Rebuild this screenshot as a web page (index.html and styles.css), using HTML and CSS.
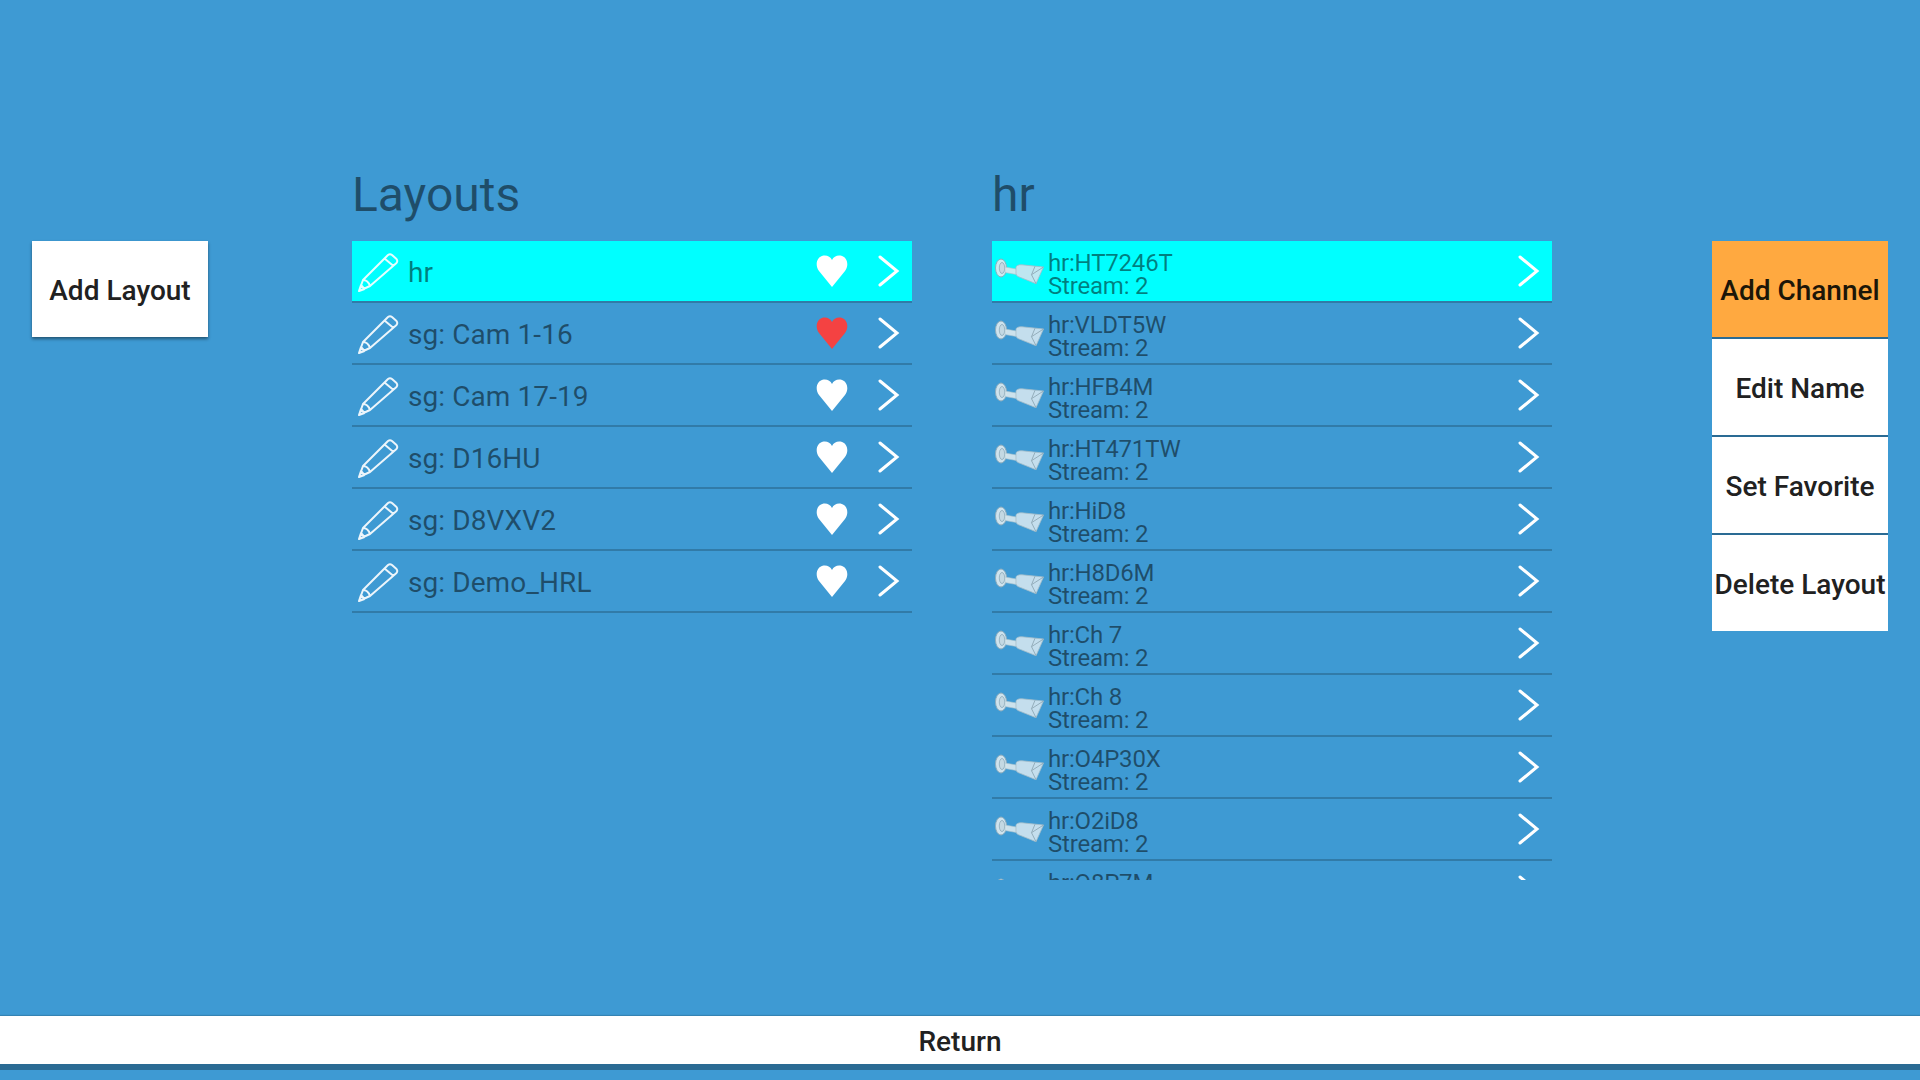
FILE: index.html
```html
<!DOCTYPE html>
<html lang="en">
<head>
    <meta charset="UTF-8">
    <meta name="viewport" content="width=device-width, initial-scale=1.0">
    <title>Layouts</title>
    <link rel="stylesheet" href="styles.css">
</head>
<body>
    <svg class="defs" width="0" height="0">
        <symbol id="pencil" viewBox="0 0 42 40">
            <path d="M2 38 L6 27 L31 2 Q33 0.5 35 2 L39.5 6 Q41 8 39.5 10 L13 33 Z M6 27 Q11 27 13 33 M27.5 5.500 L36.500 13 M2 38 L4 32 L7.500 36 Z" fill="none" stroke="#fff" stroke-opacity="0.9" stroke-width="2" stroke-linejoin="round"/>
        </symbol>
        <symbol id="heart" viewBox="0 0 32 32">
            <path d="M16 32 L3 16 C-1 11 0 2 7.5 0.5 C11 0 14.5 1.5 16 5 C17.5 1.5 21 0 24.5 0.5 C32 2 33 11 29 16 Z"/>
        </symbol>
        <symbol id="chevron" viewBox="0 0 22 32">
            <path d="M2 2 L19 16 L2 30" fill="none" stroke="#fff" stroke-width="3" stroke-linecap="round" stroke-linejoin="miter"/>
        </symbol>
        <symbol id="camera" viewBox="0 0 50 27">
            <ellipse cx="6" cy="10" rx="5.500" ry="9" fill="#dbe9ef" fill-opacity="0.92" stroke="#8fadbd" stroke-width="1"/>
            <ellipse cx="7" cy="10" rx="2.700" ry="5.500" fill="#c4d9e3" stroke="#9ab6c4" stroke-width="1"/>
            <path d="M10 9 L21.500 11 L21.500 16.500 L10 14.500 Z" fill="#d9e8ee" fill-opacity="0.92" stroke="#a9c2ce" stroke-width="0.6"/>
            <path d="M22.500 7.500 Q24 6.500 27 6.800 L48.500 9 L41 25.700 L23 18.500 Q21 17.500 21 15.500 L21 9.500 Q21 8 22.500 7.500 Z" fill="#cfe4ef" fill-opacity="0.92" stroke="#a2bcc9" stroke-width="0.8"/>
            <path d="M40 8.300 L36.500 16.700 L41 25.700 M36.500 16.700 L48.500 9" fill="none" stroke="#8ea8b6" stroke-width="0.9"/>
        </symbol>
    </svg>

    <main class="screen">
        <div class="side side-left">
            <button class="action raised">Add Layout</button>
        </div>

        <h2 class="heading heading-layouts">Layouts</h2>
        <ul class="list list-layouts">
            <li class="row selected">
                <svg class="pencil"><use href="#pencil"/></svg>
                <span class="row-name">hr</span>
                <svg class="heart"><use href="#heart"/></svg>
                <svg class="chevron"><use href="#chevron"/></svg>
            </li>
            <li class="row">
                <svg class="pencil"><use href="#pencil"/></svg>
                <span class="row-name">sg: Cam 1-16</span>
                <svg class="heart favorite"><use href="#heart"/></svg>
                <svg class="chevron"><use href="#chevron"/></svg>
            </li>
            <li class="row">
                <svg class="pencil"><use href="#pencil"/></svg>
                <span class="row-name">sg: Cam 17-19</span>
                <svg class="heart"><use href="#heart"/></svg>
                <svg class="chevron"><use href="#chevron"/></svg>
            </li>
            <li class="row">
                <svg class="pencil"><use href="#pencil"/></svg>
                <span class="row-name">sg: D16HU</span>
                <svg class="heart"><use href="#heart"/></svg>
                <svg class="chevron"><use href="#chevron"/></svg>
            </li>
            <li class="row">
                <svg class="pencil"><use href="#pencil"/></svg>
                <span class="row-name">sg: D8VXV2</span>
                <svg class="heart"><use href="#heart"/></svg>
                <svg class="chevron"><use href="#chevron"/></svg>
            </li>
            <li class="row">
                <svg class="pencil"><use href="#pencil"/></svg>
                <span class="row-name">sg: Demo_HRL</span>
                <svg class="heart"><use href="#heart"/></svg>
                <svg class="chevron"><use href="#chevron"/></svg>
            </li>
        </ul>

        <h2 class="heading heading-channels">hr</h2>
        <ul class="list list-channels">
            <li class="row selected">
                <svg class="camera"><use href="#camera"/></svg>
                <span class="channel">hr:HT7246T<br>Stream: 2</span>
                <svg class="chevron"><use href="#chevron"/></svg>
            </li>
            <li class="row">
                <svg class="camera"><use href="#camera"/></svg>
                <span class="channel">hr:VLDT5W<br>Stream: 2</span>
                <svg class="chevron"><use href="#chevron"/></svg>
            </li>
            <li class="row">
                <svg class="camera"><use href="#camera"/></svg>
                <span class="channel">hr:HFB4M<br>Stream: 2</span>
                <svg class="chevron"><use href="#chevron"/></svg>
            </li>
            <li class="row">
                <svg class="camera"><use href="#camera"/></svg>
                <span class="channel">hr:HT471TW<br>Stream: 2</span>
                <svg class="chevron"><use href="#chevron"/></svg>
            </li>
            <li class="row">
                <svg class="camera"><use href="#camera"/></svg>
                <span class="channel">hr:HiD8<br>Stream: 2</span>
                <svg class="chevron"><use href="#chevron"/></svg>
            </li>
            <li class="row">
                <svg class="camera"><use href="#camera"/></svg>
                <span class="channel">hr:H8D6M<br>Stream: 2</span>
                <svg class="chevron"><use href="#chevron"/></svg>
            </li>
            <li class="row">
                <svg class="camera"><use href="#camera"/></svg>
                <span class="channel">hr:Ch 7<br>Stream: 2</span>
                <svg class="chevron"><use href="#chevron"/></svg>
            </li>
            <li class="row">
                <svg class="camera"><use href="#camera"/></svg>
                <span class="channel">hr:Ch 8<br>Stream: 2</span>
                <svg class="chevron"><use href="#chevron"/></svg>
            </li>
            <li class="row">
                <svg class="camera"><use href="#camera"/></svg>
                <span class="channel">hr:O4P30X<br>Stream: 2</span>
                <svg class="chevron"><use href="#chevron"/></svg>
            </li>
            <li class="row">
                <svg class="camera"><use href="#camera"/></svg>
                <span class="channel">hr:O2iD8<br>Stream: 2</span>
                <svg class="chevron"><use href="#chevron"/></svg>
            </li>
            <li class="row">
                <svg class="camera"><use href="#camera"/></svg>
                <span class="channel">hr:O8P7M<br>Stream: 2</span>
                <svg class="chevron"><use href="#chevron"/></svg>
            </li>
        </ul>

        <div class="side side-right">
            <button class="action active">Add Channel</button>
            <button class="action">Edit Name</button>
            <button class="action">Set Favorite</button>
            <button class="action last">Delete Layout</button>
        </div>
    </main>

    <button class="return-bar">Return</button>
</body>
</html>
```

FILE: styles.css
```css
* {
    box-sizing: border-box;
}

html, body {
    height: 100%;
}

body {
    margin: 0;
    display: flex;
    flex-direction: column;
    height: 100vh;
    overflow: hidden;
    background-color: #3e9ad3;
    font-family: Roboto, "Liberation Sans", sans-serif;
    padding-bottom: 10px;
}

.defs {
    position: absolute;
}

.screen {
    flex: 1;
    display: grid;
    grid-template-columns: 32px 176px 144px 560px 80px 560px 160px 176px 32px;
    grid-template-rows: 241px 639px;
}

.heading {
    margin: 0;
    align-self: end;
    padding-bottom: 18px;
    font-size: 48px;
    line-height: 56px;
    font-weight: 400;
    color: rgba(0, 0, 0, 0.5);
    grid-row: 1;
}

.heading-layouts {
    grid-column: 4;
}

.heading-channels {
    grid-column: 6;
}

.list {
    list-style: none;
    margin: 0;
    padding: 0;
    overflow: hidden;
    grid-row: 2;
}

.list-layouts {
    grid-column: 4;
}

.list-channels {
    grid-column: 6;
}

.row {
    display: flex;
    align-items: center;
    height: 62px;
    border-bottom: 2px solid rgba(0, 0, 0, 0.2);
    color: rgba(0, 0, 0, 0.5);
}

.row.selected {
    background-color: #00ffff;
    background-clip: padding-box;
}

.pencil {
    width: 42px;
    height: 40px;
    margin: 3px 0 0 5px;
    flex: none;
}

.row-name {
    margin: 2px 0 0 9px;
    flex: 1;
    font-size: 28px;
    letter-spacing: 0.08px;
}

.heart {
    width: 32px;
    height: 32px;
    margin-right: 30px;
    fill: #fff;
    flex: none;
}

.heart.favorite {
    fill: #f44242;
}

.chevron {
    width: 22px;
    height: 32px;
    margin-right: 12px;
    flex: none;
}

.camera {
    width: 50px;
    height: 27px;
    margin-left: 3px;
    flex: none;
}

.channel {
    margin: 7px 0 0 3px;
    flex: 1;
    font-size: 24px;
    line-height: 23px;
    letter-spacing: -0.2px;
}

.side {
    grid-row: 2;
    display: flex;
    flex-direction: column;
    align-items: stretch;
}

.side-left {
    grid-column: 2;
}

.side-right {
    grid-column: 8;
}

.action {
    height: 98px;
    padding: 2px 0 0;
    background-color: #fff;
    background-clip: padding-box;
    border: none;
    border-bottom: 2px solid #2a6b94;
    font-family: inherit;
    font-size: 28px;
    font-weight: 500;
    color: #212121;
    white-space: nowrap;
}

.action.active {
    background-color: #ffa940;
    color: #1c1608;
}

.action.last {
    height: 96px;
    border-bottom: none;
}

.action.raised {
    height: 96px;
    border-bottom: none;
    box-shadow: 0 2px 3px rgba(0, 0, 0, 0.45);
}

.return-bar {
    height: 54px;
    flex: none;
    padding: 2px 0 0;
    background-color: #fff;
    border: none;
    border-bottom: 6px solid #2a6b94;
    box-shadow: 0 -1px 1px rgba(0, 0, 0, 0.15);
    font-family: inherit;
    font-size: 28px;
    font-weight: 500;
    color: #212121;
}
```
